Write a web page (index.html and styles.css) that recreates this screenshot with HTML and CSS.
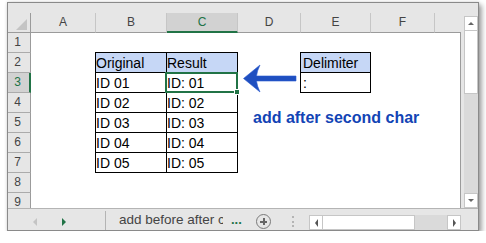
FILE: index.html
```html
<!DOCTYPE html>
<html lang="en">
<head>
    <meta charset="UTF-8">
    <title>add after second char</title>
    <link rel="stylesheet" href="styles.css">
</head>
<body>
    <div class="window">
        <div class="strip"></div>
        <div class="main">
            <div class="sheet">
                <div class="colheads">
                    <div class="corner"><span class="tri"></span></div>
                    <div class="ch">A</div>
                    <div class="ch">B</div>
                    <div class="ch sel">C</div>
                    <div class="ch">D</div>
                    <div class="ch">E</div>
                    <div class="ch">F</div>
                    <div class="ch last"></div>
                </div>
                <div class="body">
                    <div class="rowheads">
                        <div class="rh">1</div>
                        <div class="rh">2</div>
                        <div class="rh sel">3</div>
                        <div class="rh">4</div>
                        <div class="rh">5</div>
                        <div class="rh">6</div>
                        <div class="rh">7</div>
                        <div class="rh">8</div>
                        <div class="rh">9</div>
                    </div>
                    <div class="cells">
                        <div class="tbl">
                            <div class="cell head">Original</div>
                            <div class="cell head">Result</div>
                            <div class="cell">ID 01</div>
                            <div class="cell active">ID: 01<span class="selbox"><span class="handle"></span></span></div>
                            <div class="cell">ID 02</div>
                            <div class="cell">ID: 02</div>
                            <div class="cell">ID 03</div>
                            <div class="cell">ID: 03</div>
                            <div class="cell">ID 04</div>
                            <div class="cell">ID: 04</div>
                            <div class="cell">ID 05</div>
                            <div class="cell">ID: 05</div>
                        </div>
                        <div class="delim">
                            <div class="cell head">Delimiter</div>
                            <div class="cell">:</div>
                        </div>
                    </div>
                    <svg class="arrow" width="60" height="34" viewBox="0 0 60 34">
                        <path d="M3.5 16.5 L20 3 Q17 9 16.5 14 L56 14 L56 19 L16.5 19 Q17 24 20 30 Z" fill="#1f4fc0" stroke="#2a5ad0" stroke-width="0.6"/>
                    </svg>
                    <div class="note">add after second char</div>
                </div>
            </div>
            <div class="vscroll">
                <div class="vbtn up"></div>
                <div class="vthumb"></div>
                <div class="vtrack"></div>
                <div class="vbtn down"></div>
            </div>
        </div>
        <div class="tabbar">
            <div class="nav">
                <span class="prev"></span>
                <span class="next"></span>
            </div>
            <div class="sep"></div>
            <div class="tab">add before after c</div>
            <div class="more">...</div>
            <div class="add"></div>
            <div class="dots"></div>
            <div class="hscroll">
                <div class="hbtn left"></div>
                <div class="hthumb"></div>
                <div class="htrack"></div>
                <div class="hbtn right"></div>
            </div>
        </div>
    </div>
</body>
</html>
```

FILE: styles.css
```css
* {
    margin: 0;
    padding: 0;
    box-sizing: border-box;
}

body {
    background: #fff;
    font-family: "Liberation Sans", Arial, sans-serif;
}

.window {
    margin: 2px 0 0 7px;
    width: 472px;
    height: 229px;
    border: 1px solid #8a8a8a;
    background: #e6e6e6;
    box-shadow: 3px 3px 5px rgba(0, 0, 0, .35), 0 0 3px rgba(0, 0, 0, .15);
    display: flex;
    flex-direction: column;
}

.strip {
    height: 10px;
}

.main {
    display: flex;
    height: 195px;
}

.sheet {
    width: 453px;
    display: flex;
    flex-direction: column;
}

/* column headers */
.colheads {
    display: grid;
    grid-template-columns: 23px 65px 71px 71px 63px 70px 64px 1fr;
    height: 20px;
}

.colheads > div {
    border-bottom: 1px solid #9b9b9b;
    border-right: 1px solid #c6c6c6;
    text-align: center;
    font-size: 12px;
    line-height: 19px;
    color: #444;
}

.colheads .corner {
    border-right-color: #9b9b9b;
    display: flex;
    justify-content: flex-end;
    align-items: flex-end;
    padding: 0 3px 2px 0;
}

.tri {
    width: 0;
    height: 0;
    border-left: 11px solid transparent;
    border-bottom: 11px solid #c4c4c4;
}

.colheads .sel {
    background: #d2d2d2;
    border-bottom: 2px solid #217346;
    line-height: 18px;
    color: #217346;
}

.colheads .last {
    border-right: 0;
}

/* sheet body */
.body {
    position: relative;
    flex: 1;
    display: flex;
    background: #fff;
    border-right: 1px solid #9b9b9b;
    overflow: hidden;
}

.rowheads {
    width: 23px;
    flex-shrink: 0;
}

.rh {
    height: 20px;
    background: #e6e6e6;
    border-right: 1px solid #9b9b9b;
    border-bottom: 1px solid #ababab;
    padding-right: 3px;
    text-align: center;
    font-size: 12px;
    line-height: 19px;
    color: #444;
}

.rh.sel {
    background: #d2d2d2;
    border-right: 2px solid #217346;
    padding-right: 2px;
    color: #217346;
}

.cells {
    flex: 1;
    display: grid;
    grid-template-columns: 65px 71px 71px 63px 70px 64px;
    grid-template-rows: repeat(9, 20px);
}

.tbl {
    grid-column: 2 / 4;
    grid-row: 2 / 8;
    margin: -1px 0 0 -1px;
    border-left: 1px solid #000;
    border-top: 1px solid #000;
    display: grid;
    grid-template-columns: 71px 71px;
    grid-auto-rows: 20px;
}

.delim {
    grid-column: 5;
    grid-row: 2 / 4;
    margin: -1px 0 0 -1px;
    border-left: 1px solid #000;
    border-top: 1px solid #000;
    display: grid;
    grid-auto-rows: 20px;
}

.cell {
    border-right: 1px solid #000;
    border-bottom: 1px solid #000;
    font-size: 14px;
    line-height: 20px;
    color: #000;
    white-space: nowrap;
}

.delim .cell {
    padding-left: 2px;
}

.cell.head {
    background: #c6d7f6;
}

.cell.active {
    position: relative;
}

.selbox {
    position: absolute;
    top: -1px;
    left: -2px;
    right: -1px;
    bottom: -1px;
    border: 2px solid #217346;
}

.handle {
    position: absolute;
    right: -4px;
    bottom: -4px;
    width: 6px;
    height: 6px;
    background: #217346;
    border: 1px solid #fff;
}

.arrow {
    position: absolute;
    left: 232px;
    top: 29px;
}

.note {
    position: absolute;
    left: 245px;
    top: 76px;
    font-size: 16px;
    line-height: 18px;
    font-weight: bold;
    color: #1244b5;
    white-space: nowrap;
}

/* vertical scroll bar */
.vscroll {
    width: 17px;
    padding: 3px 0 0 3px;
    display: flex;
    flex-direction: column;
}

.vbtn {
    height: 15px;
    background: #fff;
    border: 1px solid #c6c6c6;
    display: flex;
    justify-content: center;
    align-items: center;
}

.vbtn::before {
    content: "";
    border-left: 3px solid transparent;
    border-right: 3px solid transparent;
}

.up::before {
    border-bottom: 3px solid #666;
}

.down::before {
    border-top: 3px solid #666;
}

.vthumb {
    height: 63px;
    background: #fff;
    border: 1px solid #c6c6c6;
    border-top: 0;
}

.vtrack {
    flex: 1;
    background: #dadada;
}

/* sheet tabs */
.tabbar {
    height: 22px;
    border-top: 1px solid #b4b4b4;
    display: flex;
    align-items: flex-start;
}

.nav {
    width: 97px;
    display: flex;
    padding-top: 9px;
}

.prev {
    margin-left: 25px;
    border-right: 4px solid #c4c4c4;
    border-top: 4px solid transparent;
    border-bottom: 4px solid transparent;
}

.next {
    margin-left: 25px;
    border-left: 4px solid #217346;
    border-top: 4px solid transparent;
    border-bottom: 4px solid transparent;
}

.sep {
    width: 1px;
    height: 19px;
    margin-top: 2px;
    background: #b4b4b4;
}

.tab {
    width: 117px;
    padding: 2px 0 0 13px;
    overflow: hidden;
    white-space: nowrap;
    font-size: 13.5px;
    line-height: 18px;
    color: #444;
}

.more {
    width: 11px;
    margin-left: 8px;
    padding-top: 2px;
    font-size: 13px;
    line-height: 18px;
    font-weight: bold;
    color: #217346;
}

.add {
    position: relative;
    width: 15px;
    height: 15px;
    margin: 5px 0 0 14px;
    border: 1px solid #7a7a7a;
    border-radius: 50%;
}

.add::before,
.add::after {
    content: "";
    position: absolute;
    background: #666;
    left: 3px;
    top: 5.5px;
    width: 7px;
    height: 2px;
}

.add::after {
    left: 5.5px;
    top: 3px;
    width: 2px;
    height: 7px;
}

.dots {
    width: 2px;
    height: 11px;
    margin: 7px 0 0 21px;
    border-left: 2px dotted #b4b4b4;
}

.hscroll {
    display: flex;
    width: 152px;
    height: 15px;
    margin: 6px 0 0 15px;
}

.hbtn {
    width: 14px;
    background: #fff;
    border: 1px solid #c6c6c6;
    display: flex;
    justify-content: center;
    align-items: center;
}

.hbtn::before {
    content: "";
    border-top: 4px solid transparent;
    border-bottom: 4px solid transparent;
}

.left::before {
    border-right: 3px solid #555;
}

.right::before {
    border-left: 3px solid #555;
}

.hthumb {
    width: 92px;
    background: #fff;
    border: 1px solid #c6c6c6;
    border-left: 0;
}

.htrack {
    width: 32px;
    background: #dadada;
}
```
